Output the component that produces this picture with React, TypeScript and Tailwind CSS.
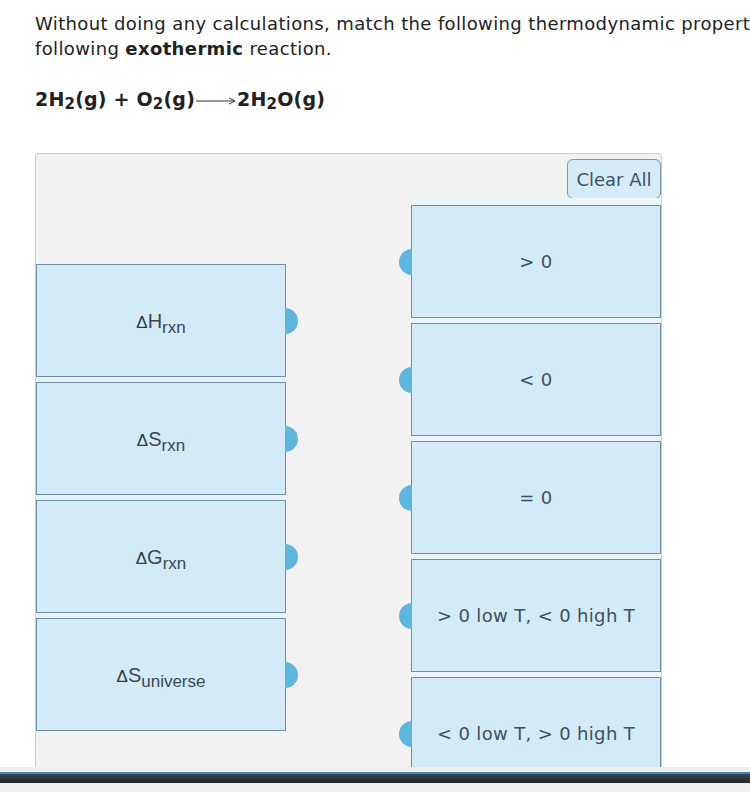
import type { ReactNode } from "react";

const verdana = "font-['DejaVu_Sans',Verdana,sans-serif]";
const arial = "font-['Liberation_Sans',Arial,sans-serif]";

type Term = { symbol: string; sub: string };

const terms: Term[] = [
    { symbol: "H", sub: "rxn" },
    { symbol: "S", sub: "rxn" },
    { symbol: "G", sub: "rxn" },
    { symbol: "S", sub: "universe" },
];

const values = ["> 0", "< 0", "= 0", "> 0 low T, < 0 high T", "< 0 low T, > 0 high T"];

const Sub = ({ children }: { children: ReactNode }) => (
    <sub className="text-[15px] relative top-[3px]">{children}</sub>
);

const ReactionArrow = () => (
    <svg width="40" height="10" viewBox="0 0 40 10" className="inline-block mx-[1px] align-middle">
        <line x1="0" y1="5" x2="38" y2="5" stroke="#333" strokeWidth="1" />
        <path d="M33 2 L39 5 L33 8" fill="none" stroke="#333" strokeWidth="1" />
    </svg>
);

// draggable term on the left, anchor dot sticks out on the right edge
const TermCard = ({ term }: { term: Term }) => (
    <div className="relative h-[113px] bg-[#d3eaf7] border border-[#6f8fa7] flex items-center justify-center text-[#3a4856]">
        <span className={`${arial} flex items-baseline`}>
            <span className="text-[17px] text-[#2e3a45]">Δ</span>
            <span className="text-[20px]">{term.symbol}</span>
            <span className="text-[17px] relative top-[5px]">{term.sub}</span>
        </span>
        <span className="absolute left-full top-1/2 -translate-y-1/2 w-[13px] h-[26px] rounded-r-full bg-[#5fb6dd]" />
    </div>
);

const ValueCard = ({ value }: { value: string }) => (
    <div className="relative h-[113px] bg-[#d3eaf7] border border-[#6f8fa7] flex items-center justify-center text-[#3d5062]">
        <span className={`${verdana} text-[18px] tracking-[0.35px]`}>{value}</span>
        <span className="absolute right-full top-1/2 -translate-y-1/2 w-[13px] h-[26px] rounded-l-full bg-[#5fb6dd]" />
    </div>
);

export default function App() {
    return (
        <div className="w-[750px] h-[792px] flex flex-col bg-white overflow-hidden">
            <div className="flex-1 overflow-hidden">
                <div className={`${verdana} text-[18px] leading-[25px] tracking-[0.37px] text-[#222] pl-[35px] pt-[11px] whitespace-nowrap`}>
                    <p>Without doing any calculations, match the following thermodynamic properties with their values for the</p>
                    <p>
                        following <b>exothermic</b> reaction.
                    </p>
                    <p className="font-bold text-[19px] tracking-[0.2px] mt-[26px]">
                        2H<Sub>2</Sub>(g) + O<Sub>2</Sub>(g)
                        <ReactionArrow />
                        2H<Sub>2</Sub>O(g)
                    </p>
                </div>

                <div className="ml-[35px] mt-[41px] w-[627px] h-[700px] bg-[#f2f2f2] border border-[#cdcdcd] rounded-t-[3px] flex justify-between">
                    <div className="w-[250px] mt-[110px] self-start bg-[#e8f2fa] flex flex-col gap-[5px]">
                        {terms.map((t, i) => (
                            <TermCard key={i} term={t} />
                        ))}
                    </div>

                    <div className="w-[250px] pt-[5px] flex flex-col">
                        <div className="flex justify-end">
                            <button
                                className={`${verdana} w-[94px] h-[40px] text-[18px] text-[#3a5268] bg-[#d6ebf8] border border-[#7d98ac] rounded-[6px]`}
                            >
                                Clear All
                            </button>
                        </div>
                        <div className="mt-[-1px] pt-[7px] bg-[#eef5fa] flex flex-col gap-[5px]">
                            {values.map((v) => (
                                <ValueCard key={v} value={v} />
                            ))}
                        </div>
                    </div>
                </div>
            </div>

            {/* page footer strip */}
            <div className="h-[5px] bg-[#efefef]" />
            <div className="h-[2px] bg-[#2e8ec6]" />
            <div className="h-[9px] bg-gradient-to-b from-[#3b4449] to-[#22282b]" />
            <div className="h-[9px] bg-[#efefef]" />
        </div>
    );
}
